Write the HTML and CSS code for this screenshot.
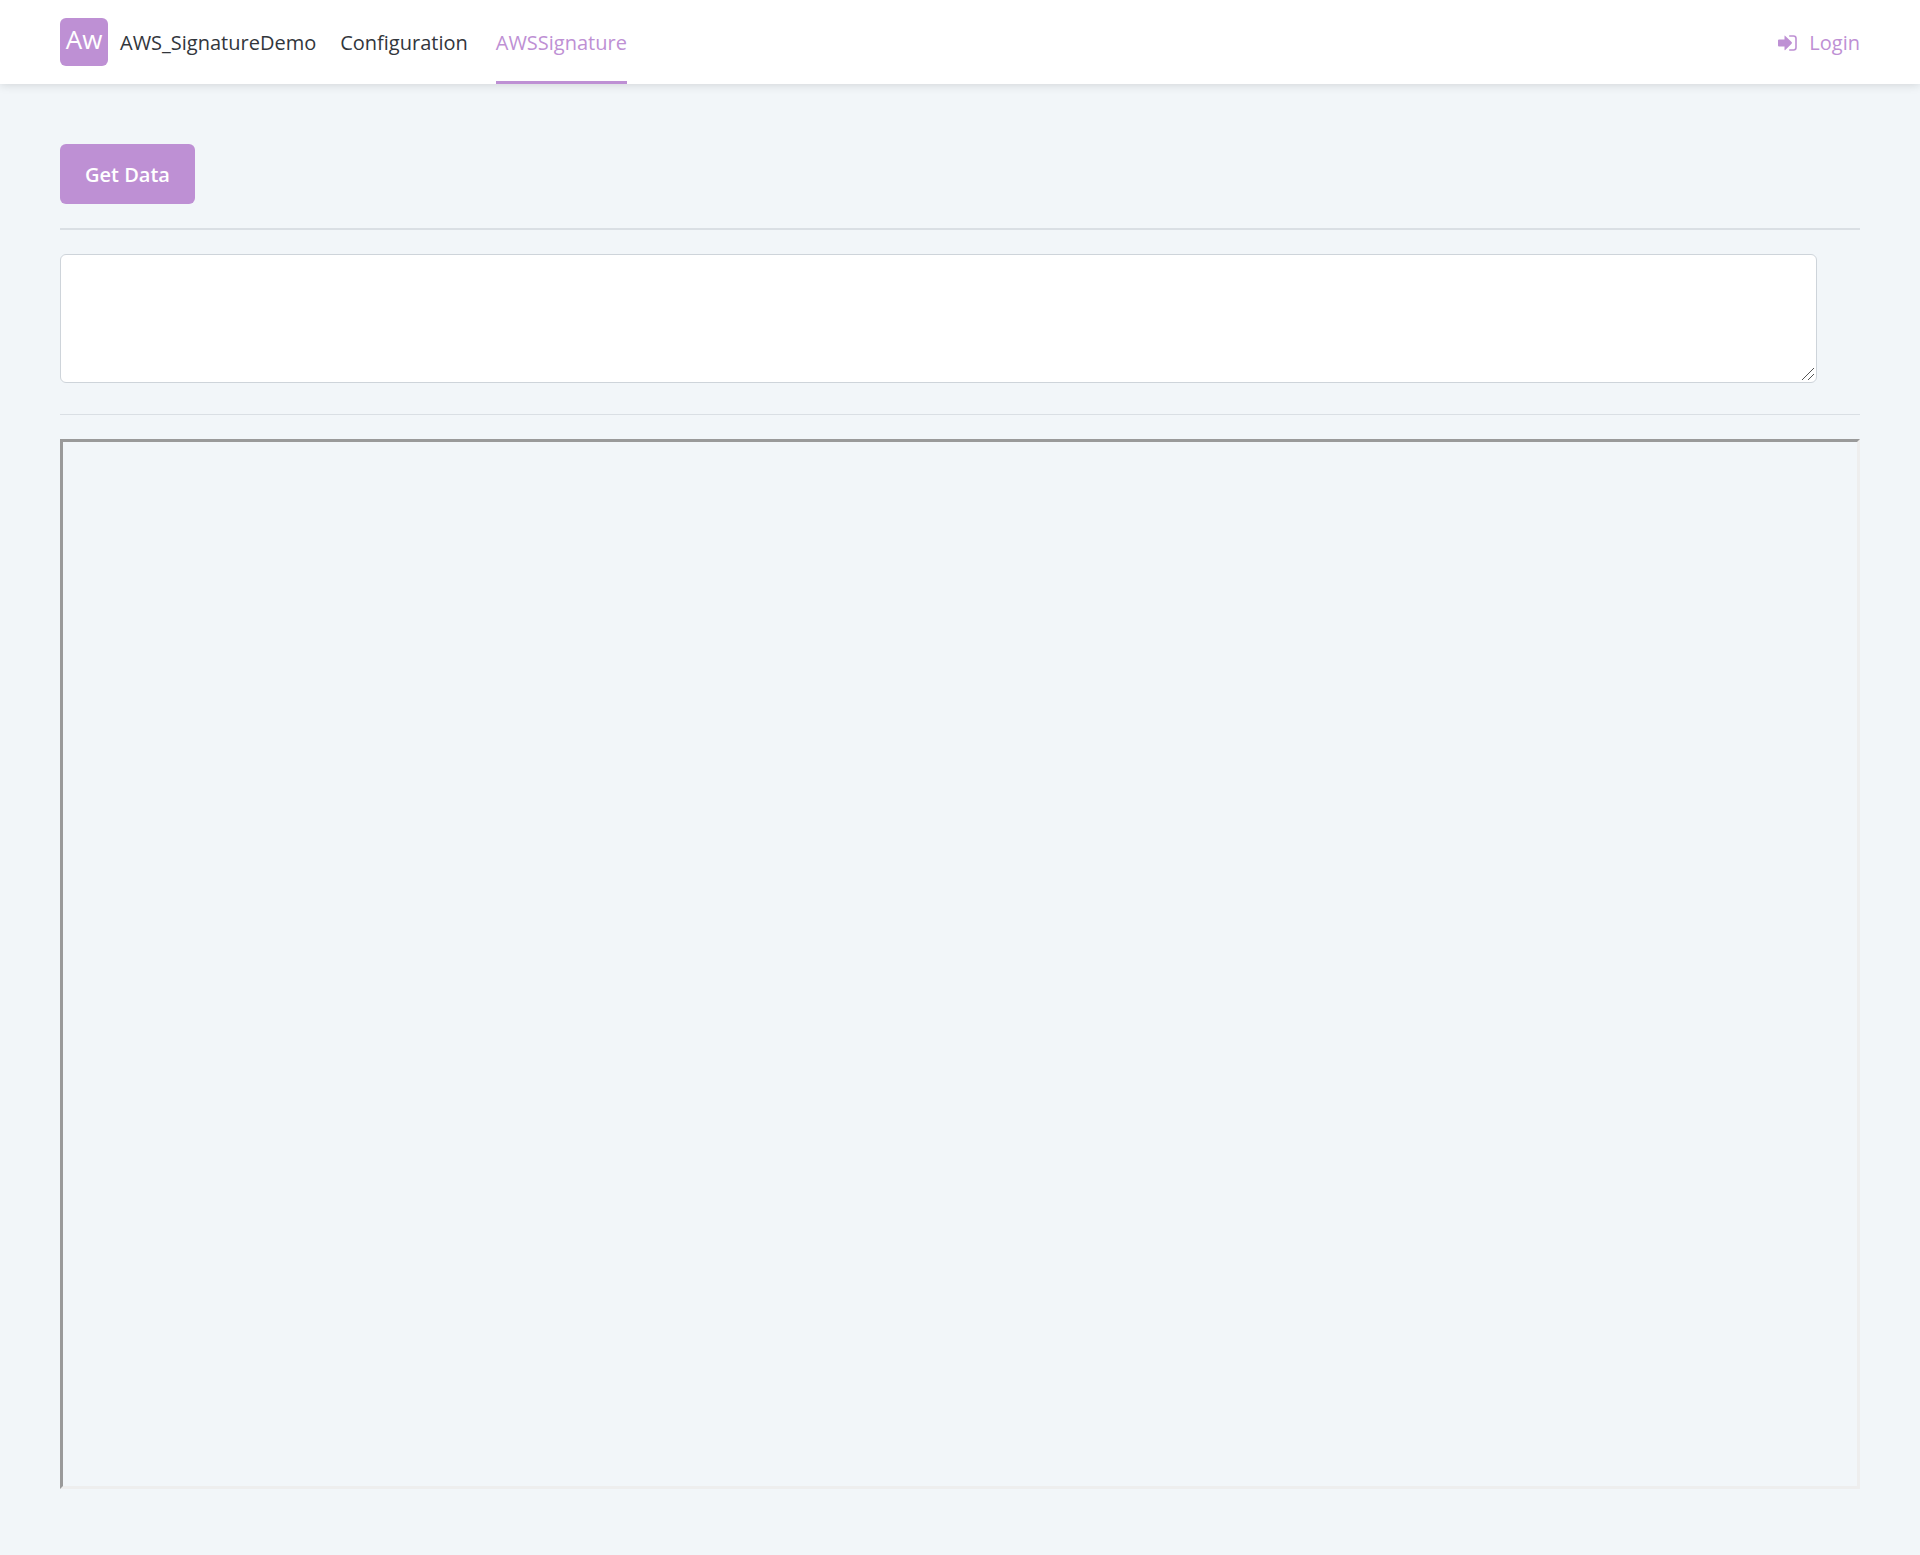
FILE: index.html
```html
<!DOCTYPE html>
<html lang="en">
<head>
  <meta charset="utf-8">
  <meta name="viewport" content="width=device-width, initial-scale=1">
  <title>AWS_SignatureDemo</title>
  <link rel="stylesheet" href="styles.css">
</head>
<body>
  <header class="header">
    <a class="brand" href="#">
      <span class="brand-logo" aria-hidden="true">Aw</span>
      <span class="label">AWS_SignatureDemo</span>
    </a>
    <nav class="menu">
      <a class="menu-item" href="#"><span class="label">Configuration</span></a>
      <a class="menu-item active" href="#"><span class="label">AWSSignature</span></a>
    </nav>
    <a class="login" href="#">
      <svg class="login-icon" viewBox="0 0 19 16" aria-hidden="true">
        <path d="M1 4.500h5.500V1.200q0-1 .8-.3l6.300 6.200q.8.800 0 1.600l-6.300 6.200q-.8.700-.8-.3V11.500H1q-1 0-1-1v-5q0-1 1-1z" fill="currentColor"/>
        <path d="M11.200 1h4.300q2.500 0 2.500 2.500v9q0 2.500-2.500 2.500h-4.300" fill="none" stroke="currentColor" stroke-width="1.600"/>
      </svg>
      <span class="label">Login</span>
    </a>
  </header>
  <main class="content">
    <button class="btn" type="button">Get Data</button>
    <hr class="rule rule-thick">
    <div class="field">
      <textarea class="result" aria-label="Data"></textarea>
      <svg class="grip" viewBox="0 0 14 14" aria-hidden="true">
        <path d="M1 13L13 1M7 13L13 7" fill="none" stroke="#555" stroke-width="1"/>
      </svg>
    </div>
    <hr class="rule">
    <iframe class="preview" title="Preview"></iframe>
  </main>
</body>
</html>
```

FILE: styles.css
```css
* {
  box-sizing: border-box;
}

body {
  margin: 0;
  background: #f2f6f9;
  color: #32363c;
  font: 20px/32px "Open Sans", "Noto Sans", sans-serif;
}

a {
  color: inherit;
  text-decoration: none;
}

.header {
  position: relative;
  display: flex;
  align-items: center;
  height: 84px;
  padding: 0 60px;
  background: #fff;
  box-shadow: 0 0 10px rgba(0, 0, 0, 0.16);
}

.label {
  padding-top: 2px;
}

.brand {
  display: flex;
  align-items: center;
  gap: 12px;
  margin-right: 24px;
}

.brand-logo {
  width: 48px;
  height: 48px;
  border-radius: 6px;
  background: #be90d4;
  color: #fff;
  font-size: 26px;
  line-height: 42px;
  text-align: center;
}

.menu {
  display: flex;
  align-self: stretch;
  gap: 28px;
}

.menu-item {
  display: flex;
  align-items: center;
  border-top: 3px solid transparent;
  border-bottom: 3px solid transparent;
}

.menu-item.active {
  border-bottom-color: #be90d4;
  color: #be90d4;
}

.login {
  display: flex;
  align-items: center;
  gap: 12px;
  margin-left: auto;
  color: #be90d4;
}

.login-icon {
  width: 19px;
  height: 16px;
  margin-top: 2px;
}

.content {
  padding: 60px 60px 66px;
}

.btn {
  display: block;
  height: 60px;
  padding: 2px 25px 0;
  border: 0;
  border-radius: 6px;
  background: #be90d4;
  color: #fff;
  font: inherit;
  font-weight: 600;
}

.rule {
  height: 1px;
  margin: 24px 0;
  border: 0;
  background: #dadfe4;
}

.rule-thick {
  height: 2px;
}

.field {
  position: relative;
  width: 97.6%;
  margin-bottom: 31px;
}

.result {
  display: block;
  width: 100%;
  height: 129px;
  padding: 6px 12px;
  border: 1px solid #ced4da;
  border-radius: 6px;
  background: #fff;
  font: inherit;
  resize: vertical;
}

.result::-webkit-resizer {
  background: transparent;
}

.grip {
  position: absolute;
  right: 2px;
  bottom: 2px;
  width: 14px;
  height: 14px;
  pointer-events: none;
}

.preview {
  display: block;
  width: 100%;
  height: 1050px;
  border: 3px solid #eee;
  border-top-color: #9a9a9a;
  border-left-color: #9a9a9a;
}
```
